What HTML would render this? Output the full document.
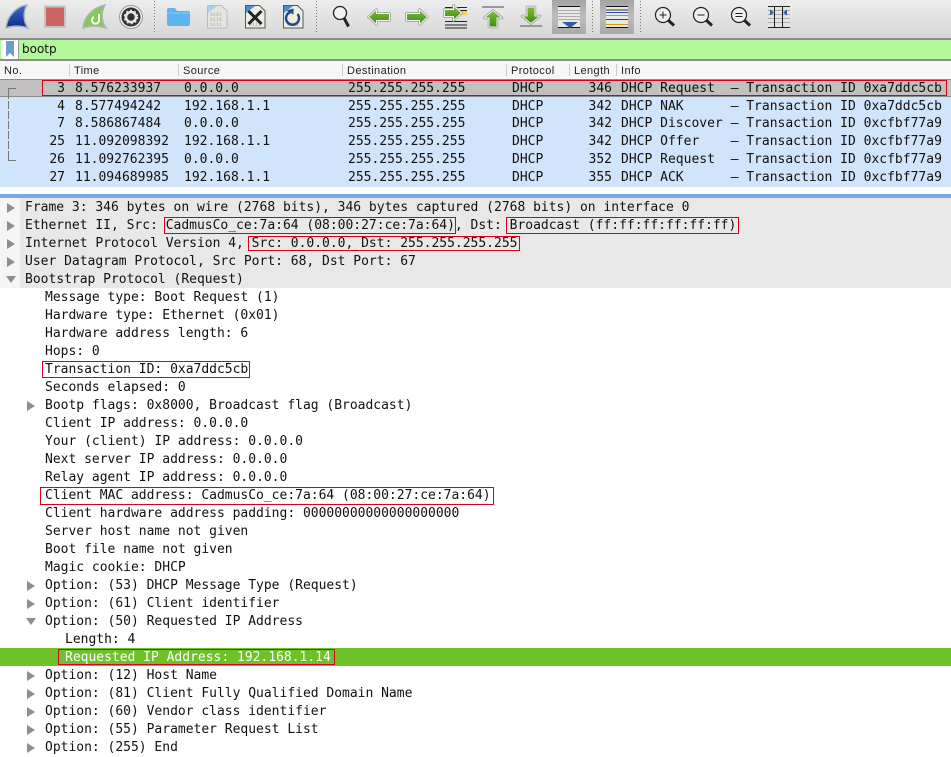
<!DOCTYPE html>
<html><head><meta charset="utf-8"><style>
html,body{margin:0;padding:0;background:#fff}
#p{position:relative;width:951px;height:757px;overflow:hidden;background:#fff;font:13px/20px "DejaVu Sans Mono","Liberation Mono",monospace;color:#111}
#p div{position:absolute;white-space:pre}
.h{top:61px;height:18px;font:11px/20px "Liberation Sans",sans-serif;letter-spacing:.4px;color:#222}
.s{top:64px;width:1px;height:12px;background:#ccc}
.r{left:0;width:951px;height:18px;background:#d0e4fb}
.r div{top:0}
.n{width:50px;left:15px;text-align:right}
.t{left:75px}.o{left:184px}.d{left:348px}.q{left:512px}.l{left:572px;width:40px;text-align:right}.i{left:621px}
.x{left:0;width:951px;height:18px;letter-spacing:-.01px}
.l0{padding-left:25px}.l1{padding-left:45px}.l2{padding-left:65px}
.a{width:0;height:0;border-left:8px solid #8f8f8f;border-top:5px solid transparent;border-bottom:5px solid transparent;top:5px}
.v{width:0;height:0;border-top:7px solid #8f8f8f;border-left:5px solid transparent;border-right:5px solid transparent;top:6px}
.b{border:1px solid #d9001b;box-sizing:border-box}
</style></head><body><div id="p">
<div style="left:0;top:0;width:951px;height:38px;background:linear-gradient(#ededed,#d6d6d6)"></div>
<svg style="position:absolute;left:0;top:0" width="951" height="38" viewBox="0 0 951 38">
<defs>
<linearGradient id="pr" x1="0" x2="0" y1="0" y2="1"><stop offset="0" stop-color="#a4a4a4"/><stop offset=".5" stop-color="#bdbdbd"/><stop offset="1" stop-color="#a8a8a8"/></linearGradient>
<linearGradient id="ar" x1="0" x2="0" y1="0" y2="1"><stop offset="0" stop-color="#85bd3e"/><stop offset="1" stop-color="#3c8a10"/></linearGradient>
<linearGradient id="fn" x1="0" x2="0" y1="0" y2="1"><stop offset="0" stop-color="#3f66c6"/><stop offset="1" stop-color="#102c90"/></linearGradient>
</defs>
<path d="M6 28C7 17 15 7 27 5C23 12 23 21 28 28C20 25.500 13 25.500 6 28Z" fill="url(#fn)" stroke="#aab0ba" stroke-width="1.500"/>
<rect x="45" y="6.500" width="20" height="20.500" fill="#cc6464" stroke="#c4c4c4" stroke-width="2"/>
<path d="M83 28C84 17 92 8 105 5C101 12 101 21 106 28C98 25.500 90 25.500 83 28Z" fill="#84c95c" stroke="#b0b6ac" stroke-width="1.500"/>
<path d="M99 14v6a3.500 3.500 0 1 1-5-3" fill="none" stroke="#fff" stroke-width="2"/>
<circle cx="131" cy="17" r="11.500" fill="#eee" stroke="#9a9a9a" stroke-width="1"/><circle cx="131" cy="17" r="9.500" fill="#333"/><circle cx="131" cy="17" r="5" fill="none" stroke="#e8e8e8" stroke-width="2.500"/><circle cx="131" cy="17" r="6.500" fill="none" stroke="#e8e8e8" stroke-width="1.500" stroke-dasharray="2 2.200"/>
<g stroke="#777" stroke-dasharray="1 2"><path d="M154.500 1V32M316.500 1V32M592.500 1V32M640.500 1V32"/></g>
<path d="M167 10q0-2 2-2h6l2 3h11q2 0 2 2v11q0 2-2 2h-19q-2 0-2-2Z" fill="#5db5f0"/><path d="M167 13h23" stroke="#8dcbf5"/>
<path d="M207.500 5.500h14l5.500 5.500v17h-19.500Z" fill="#e6e6de" stroke="#bbb"/><path d="M208 6h9l-9 7Z" fill="#a9cdea"/><text x="210" y="16" font-size="5" fill="#aaa" font-family="Liberation Mono">0101</text><text x="210" y="21" font-size="5" fill="#aaa" font-family="Liberation Mono">0110</text><text x="210" y="26" font-size="5" fill="#aaa" font-family="Liberation Mono">0111</text>
<path d="M245.500 5.500h14l5.500 5.500v17h-19.500Z" fill="#eeeee4" stroke="#555"/><path d="M246 6h9l-9 7Z" fill="#4a90d0"/><text x="249" y="26" font-size="5" fill="#999" font-family="Liberation Mono">0111</text><path d="M248.500 11l13 13M261.500 11l-13 13" stroke="#222" stroke-width="3"/>
<path d="M283.500 5.500h14l5.500 5.500v17h-19.500Z" fill="#eeeee4" stroke="#555"/><path d="M284 6h9l-9 7Z" fill="#4a90d0"/><text x="287" y="26" font-size="5" fill="#999" font-family="Liberation Mono">0111</text><path d="M290.500 12a6.500 6.500 0 1 0 7 2" fill="none" stroke="#24478f" stroke-width="2.500"/><path d="M286.500 10.500l7-2v6Z" fill="#24478f"/>
<circle cx="340" cy="13" r="6.500" fill="#f2f2f2" stroke="#222" stroke-width="1.300"/><path d="M344 18l4.500 8.500" stroke="#222" stroke-width="3"/>
<g stroke-linejoin="round">
<path d="M368.500 17l8-7.500v4h13v7h-13v4Z" fill="none" stroke="#999" stroke-width="2.500"/><path d="M368.500 17l8-7.500v4h13v7h-13v4Z" fill="url(#ar)" stroke="#f4f4f4" stroke-width="1"/>
<path d="M427.500 17l-8-7.500v4h-13v7h13v4Z" fill="none" stroke="#999" stroke-width="2.500"/><path d="M427.500 17l-8-7.500v4h-13v7h13v4Z" fill="url(#ar)" stroke="#f4f4f4" stroke-width="1"/>
<path d="M445 7.500h22M445 10.500h22M445 21.500h22M445 25h22M445 28h22" stroke="#222"/><path d="M460 11h7v4h-7Z" fill="#f7d24a"/>
<path d="M461.500 13l-8-7.500v4h-9v7h9v4Z" fill="none" stroke="#999" stroke-width="2.500"/><path d="M461.500 13l-8-7.500v4h-9v7h9v4Z" fill="url(#ar)" stroke="#f4f4f4" stroke-width="1"/>
<path d="M482 7h22" stroke="#999" stroke-width="2"/>
<path d="M493 10.500l-9 7.500h5v9h8v-9h5Z" fill="none" stroke="#999" stroke-width="2.500"/><path d="M493 10.500l-9 7.500h5v9h8v-9h5Z" fill="url(#ar)" stroke="#f4f4f4" stroke-width="1"/>
<path d="M520 26h22" stroke="#999" stroke-width="2"/>
<path d="M531 23.500l-9-7.500h5v-9h8v9h5Z" fill="none" stroke="#999" stroke-width="2.500"/><path d="M531 23.500l-9-7.500h5v-9h8v9h5Z" fill="url(#ar)" stroke="#f4f4f4" stroke-width="1"/>
</g>
<rect x="552" y="0" width="34" height="34" fill="url(#pr)"/><rect x="558" y="6" width="22" height="22" fill="#e8e8e4"/>
<path d="M558 6.500h22M558 27.500h22" stroke="#111"/><path d="M558 10.500h22M558 13.500h22M558 16.500h22M558 19.500h22" stroke="#aaa"/><path d="M562 22h16l-8 6Z" fill="#2f5ea8"/>
<rect x="600" y="0" width="34" height="34" fill="url(#pr)"/><rect x="606" y="6" width="22" height="22" fill="#e8e8e4"/>
<path d="M606 6.500h22M606 27.500h22" stroke="#111"/><path d="M606 10h22" stroke="#333"/><path d="M606 12.500h22" stroke="#2b4bb0"/><path d="M606 15.500h22" stroke="#7fb347"/><path d="M606 19.500h22" stroke="#444"/><path d="M606 24.500h22" stroke="#d29a10"/>
<circle cx="663" cy="15" r="7.500" fill="#f0f0f0" stroke="#222" stroke-width="1.200"/><path d="M668 20l6 5.500" stroke="#222" stroke-width="3"/><path d="M659.500 15h7M663 11.500v7" stroke="#222"/>
<circle cx="701" cy="15" r="7.500" fill="#f0f0f0" stroke="#222" stroke-width="1.200"/><path d="M706 20l6 5.500" stroke="#222" stroke-width="3"/><path d="M697.500 15h7" stroke="#222"/>
<circle cx="739" cy="15" r="7.500" fill="#f0f0f0" stroke="#222" stroke-width="1.200"/><path d="M744 20l6 5.500" stroke="#222" stroke-width="3"/><path d="M735.500 13.500h7M735.500 16.500h7" stroke="#222"/>
<rect x="768" y="6" width="22" height="22" fill="#e4e4e0"/><path d="M768 10.500h22M768 14.500h22M768 18.500h22M768 22.500h22" stroke="#aaa"/><path d="M768 6.500h22M768 27.500h22M774.500 6v22M782.500 6v22" stroke="#222"/>
<path d="M770 9.500l4 3-4 3ZM787 9.500l-4 3 4 3Z" fill="#2f5ea8"/>
</svg>

<div style="left:0;top:38px;width:951px;height:23px;background:#b3f89b;border-top:2px solid #8c8c8c;border-bottom:2px solid #8c8c8c;box-sizing:border-box"></div>
<div style="left:1px;top:40px;width:18px;height:19px;background:#fff;border-radius:3px 0 0 3px;border-right:1px solid #999;box-sizing:border-box"></div>
<div style="left:22px;top:39px;font:12px/20px 'DejaVu Sans',sans-serif;color:#111">bootp</div>
<svg style="position:absolute;left:5px;top:41px" width="10" height="16"><path d="M1 0h8v16l-4-4-4 4Z" fill="#6e9bce"/></svg>

<div style="left:0;top:61px;width:951px;height:18px;background:#f6f6f6"></div>
<div class="h" style="left:4px">No.</div><div class="s" style="left:69px"></div>
<div class="h" style="left:74px">Time</div><div class="s" style="left:178px"></div>
<div class="h" style="left:183px">Source</div><div class="s" style="left:342px"></div>
<div class="h" style="left:347px">Destination</div><div class="s" style="left:506px"></div>
<div class="h" style="left:511px">Protocol</div><div class="s" style="left:569px"></div>
<div class="h" style="left:574px">Length</div><div class="s" style="left:616px"></div>
<div class="h" style="left:621px">Info</div>

<div class="r" style="top:79px;background:#c1bfc0;box-shadow:inset 0 1px 0 #8c8c8c,inset 0 -1px 0 #8c8c8c"><div class="n">3</div><div class="t">8.576233937</div><div class="o">0.0.0.0</div><div class="d">255.255.255.255</div><div class="q">DHCP</div><div class="l">346</div><div class="i">DHCP Request  – Transaction ID 0xa7ddc5cb</div></div>
<div class="r" style="top:97px;height:17px"><div class="n">4</div><div class="t">8.577494242</div><div class="o">192.168.1.1</div><div class="d">255.255.255.255</div><div class="q">DHCP</div><div class="l">342</div><div class="i">DHCP NAK      – Transaction ID 0xa7ddc5cb</div></div>
<div class="r" style="top:114px"><div class="n">7</div><div class="t">8.586867484</div><div class="o">0.0.0.0</div><div class="d">255.255.255.255</div><div class="q">DHCP</div><div class="l">342</div><div class="i">DHCP Discover – Transaction ID 0xcfbf77a9</div></div>
<div class="r" style="top:132px"><div class="n">25</div><div class="t">11.092098392</div><div class="o">192.168.1.1</div><div class="d">255.255.255.255</div><div class="q">DHCP</div><div class="l">342</div><div class="i">DHCP Offer    – Transaction ID 0xcfbf77a9</div></div>
<div class="r" style="top:150px"><div class="n">26</div><div class="t">11.092762395</div><div class="o">0.0.0.0</div><div class="d">255.255.255.255</div><div class="q">DHCP</div><div class="l">352</div><div class="i">DHCP Request  – Transaction ID 0xcfbf77a9</div></div>
<div class="r" style="top:168px;height:19px"><div class="n">27</div><div class="t">11.094689985</div><div class="o">192.168.1.1</div><div class="d">255.255.255.255</div><div class="q">DHCP</div><div class="l">355</div><div class="i">DHCP ACK      – Transaction ID 0xcfbf77a9</div></div>
<svg style="position:absolute;left:0;top:79px" width="20" height="90"><path d="M16 9.500H8.500V81.500H16" fill="none" stroke="#777"/><path d="M8.500 20V72" stroke="#d0e4fb" stroke-dasharray="2 8"/></svg>
<div class="b" style="left:42px;top:80px;width:905px;height:16px"></div>

<div style="left:0;top:194px;width:951px;height:4px;background:#78a9e2"></div>
<div style="left:0;top:198px;width:20px;height:90px;background:#f5f5f5"></div>
<div style="left:20px;top:198px;width:931px;height:90px;background:#e8e8e8"></div>

<div class="x l0" style="top:198px"><div class="a" style="left:7px"></div>Frame 3: 346 bytes on wire (2768 bits), 346 bytes captured (2768 bits) on interface 0</div>
<div class="x l0" style="top:216px"><div class="a" style="left:7px"></div>Ethernet II, Src: CadmusCo_ce:7a:64 (08:00:27:ce:7a:64), Dst: Broadcast (ff:ff:ff:ff:ff:ff)</div>
<div class="x l0" style="top:234px"><div class="a" style="left:7px"></div>Internet Protocol Version 4, Src: 0.0.0.0, Dst: 255.255.255.255</div>
<div class="x l0" style="top:252px"><div class="a" style="left:7px"></div>User Datagram Protocol, Src Port: 68, Dst Port: 67</div>
<div class="x l0" style="top:270px"><div class="v" style="left:6px"></div>Bootstrap Protocol (Request)</div>
<div class="x l1" style="top:288px">Message type: Boot Request (1)</div>
<div class="x l1" style="top:306px">Hardware type: Ethernet (0x01)</div>
<div class="x l1" style="top:324px">Hardware address length: 6</div>
<div class="x l1" style="top:342px">Hops: 0</div>
<div class="x l1" style="top:360px">Transaction ID: 0xa7ddc5cb</div>
<div class="x l1" style="top:378px">Seconds elapsed: 0</div>
<div class="x l1" style="top:396px"><div class="a" style="left:27px"></div>Bootp flags: 0x8000, Broadcast flag (Broadcast)</div>
<div class="x l1" style="top:414px">Client IP address: 0.0.0.0</div>
<div class="x l1" style="top:432px">Your (client) IP address: 0.0.0.0</div>
<div class="x l1" style="top:450px">Next server IP address: 0.0.0.0</div>
<div class="x l1" style="top:468px">Relay agent IP address: 0.0.0.0</div>
<div class="x l1" style="top:486px">Client MAC address: CadmusCo_ce:7a:64 (08:00:27:ce:7a:64)</div>
<div class="x l1" style="top:504px">Client hardware address padding: 00000000000000000000</div>
<div class="x l1" style="top:522px">Server host name not given</div>
<div class="x l1" style="top:540px">Boot file name not given</div>
<div class="x l1" style="top:558px">Magic cookie: DHCP</div>
<div class="x l1" style="top:576px"><div class="a" style="left:27px"></div>Option: (53) DHCP Message Type (Request)</div>
<div class="x l1" style="top:594px"><div class="a" style="left:27px"></div>Option: (61) Client identifier</div>
<div class="x l1" style="top:612px"><div class="v" style="left:26px"></div>Option: (50) Requested IP Address</div>
<div class="x l2" style="top:630px">Length: 4</div>
<div class="x l2" style="top:648px;background:#6fc12a;color:#fff">Requested IP Address: 192.168.1.14</div>
<div class="x l1" style="top:666px"><div class="a" style="left:27px"></div>Option: (12) Host Name</div>
<div class="x l1" style="top:684px"><div class="a" style="left:27px"></div>Option: (81) Client Fully Qualified Domain Name</div>
<div class="x l1" style="top:702px"><div class="a" style="left:27px"></div>Option: (60) Vendor class identifier</div>
<div class="x l1" style="top:720px"><div class="a" style="left:27px"></div>Option: (55) Parameter Request List</div>
<div class="x l1" style="top:738px"><div class="a" style="left:27px"></div>Option: (255) End</div>

<div class="b" style="left:164px;top:217px;width:292px;height:17px"></div>
<div class="b" style="left:506px;top:217px;width:233px;height:17px"></div>
<div class="b" style="left:248px;top:236px;width:272px;height:15px"></div>
<div class="b" style="left:42px;top:361px;width:208px;height:17px"></div>
<div class="b" style="left:40px;top:487px;width:454px;height:18px"></div>
<div class="b" style="left:58px;top:649px;width:277px;height:16px"></div>
</div></body></html>
